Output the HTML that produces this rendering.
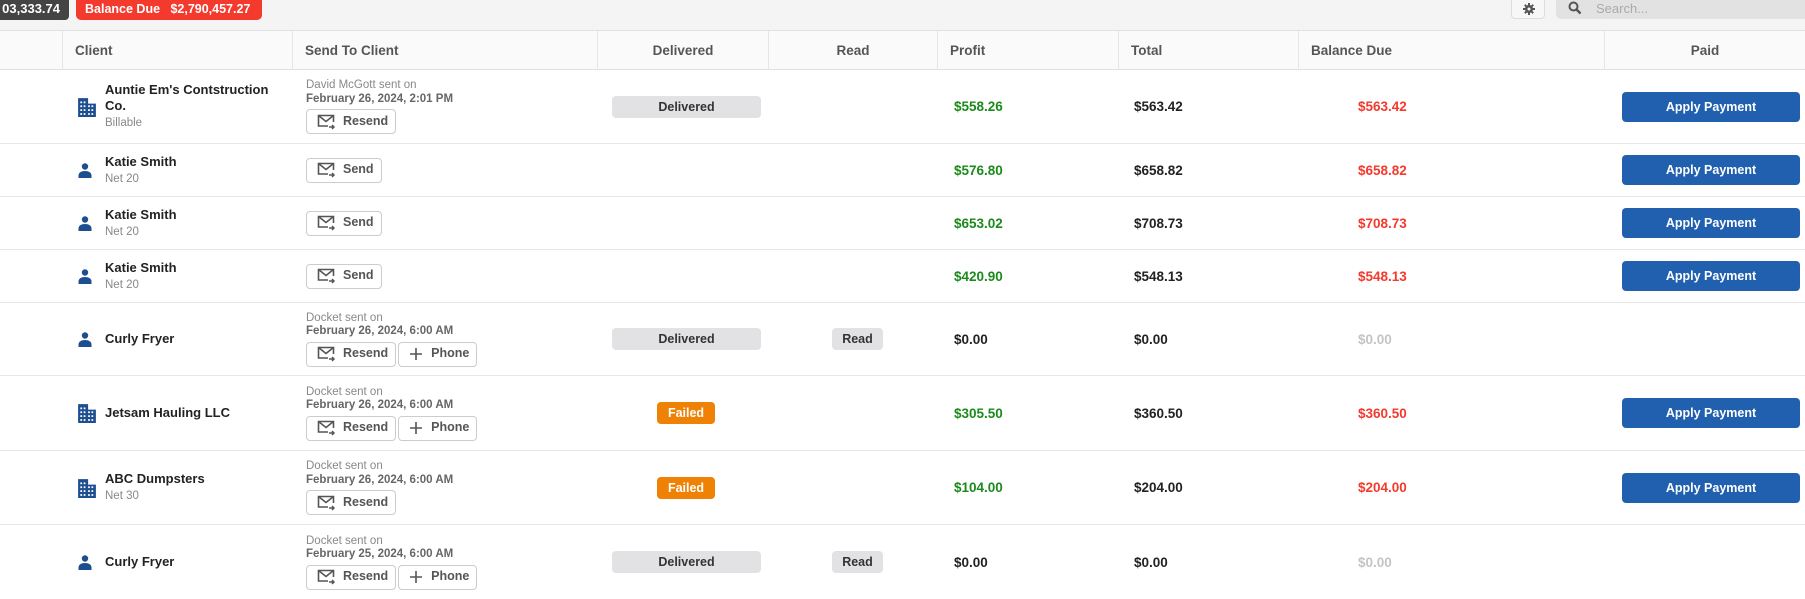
<!DOCTYPE html>
<html><head><meta charset="utf-8"><style>
*{box-sizing:border-box;margin:0;padding:0}
body{width:1805px;height:585px;overflow:hidden;background:#fff;font-family:"Liberation Sans",Arial,sans-serif;position:relative;color:#222}
.top{position:absolute;left:0;top:0;width:1805px;height:31px;background:#f4f4f4;border-bottom:1px solid #e2e2e2}
.b1{position:absolute;left:0;top:-4px;width:69px;height:24px;background:#444;color:#fff;font-weight:bold;font-size:13px;border-radius:0 0 4px 0;padding:5px 0 0 0;text-align:right;padding-right:9px}
.b2{position:absolute;left:76px;top:-4px;width:186px;height:24px;background:#f4392d;color:#fff;font-weight:bold;font-size:12.5px;border-radius:0 0 5px 5px;padding:6px 0 0 9px;white-space:nowrap}
.gear{position:absolute;left:1511px;top:-4px;width:34px;height:23px;border:1px solid #ddd;border-radius:4px;background:#f7f7f7}
.gear svg{position:absolute;left:11px;top:6px}
.search{position:absolute;left:1556px;top:-4px;width:260px;height:23px;background:#e2e2e2;border-radius:5px;color:#aaa;font-size:13px;padding:5px 0 0 40px}
.search svg{position:absolute;left:12px;top:5px}
.hdr{position:absolute;top:31px;left:0;width:1805px;height:39px;background:#fafafa;border-bottom:1px solid #e0e0e0}
.hc{position:absolute;top:0;height:39px;border-left:1px solid #e6e6e6;font-size:13.5px;color:#555;font-weight:bold;padding-top:12px}
.row{position:absolute;left:0;width:1805px;border-bottom:1.5px solid #e6e6e6}
.c{position:absolute;top:0;height:100%;display:flex;align-items:center}
.ico{position:absolute;left:77px}
.nm{position:absolute;left:105px;font-size:13px;font-weight:bold;color:#222;line-height:16px}
.sub{font-size:11.5px;color:#888;font-weight:normal}
.snd{position:absolute;left:306px;font-size:11.5px;color:#888;line-height:13.5px}
.snd b{color:#666}
.btn{display:inline-flex;align-items:center;height:25px;border:1px solid #ccc;border-radius:4px;padding:0 7px 0 10px;font-size:12.5px;color:#555;font-weight:bold;background:#fff;margin-top:3px;margin-right:2px;vertical-align:top}
.btn svg{margin-right:8px}
.pill{position:absolute;height:22px;border-radius:4px;font-size:12.5px;font-weight:bold;text-align:center;line-height:22px}
.dl{left:612px;width:149px;background:#e2e2e4;color:#333}
.rd{left:832px;width:51px;background:#e2e2e4;color:#333}
.fl{left:657px;width:58px;background:#ef8205;color:#fff}
.v{position:absolute;font-size:13.5px;font-weight:bold}
.p{left:954px;color:#1b8a1b}
.t{left:1134px;color:#222}
.bd{left:1358px;color:#f4392d}
.bz{left:1358px;color:#c4c4c4}
.ap{position:absolute;left:1622px;width:178px;height:30px;background:#2160ae;color:#fff;font-weight:bold;font-size:12.5px;border-radius:4px;text-align:center;line-height:30px}
</style></head><body>
<div class="top">
<div class="b1">03,333.74</div>
<div class="b2">Balance Due &nbsp;&nbsp;$2,790,457.27</div>
<div class="gear"><svg width="12" height="12" viewBox="0 0 12 12"><circle cx="6" cy="6" r="4" fill="#555"/><path d="M6 0v12M0 6h12M1.8 1.8l8.4 8.4M10.2 1.8l-8.4 8.4" stroke="#555" stroke-width="2"/><circle cx="6" cy="6" r="1.5" fill="#f7f7f7"/></svg></div>
<div class="search"><svg width="14" height="14" viewBox="0 0 14 14"><circle cx="5.5" cy="5.5" r="4" fill="none" stroke="#555" stroke-width="2"/><path d="M8.5 8.5L12.5 12.5" stroke="#555" stroke-width="2.5"/></svg>Search...</div>
</div>
<div class="hdr">
<div class="hc" style="left:62px;width:230px;padding-left:12px">Client</div>
<div class="hc" style="left:292px;width:305px;padding-left:12px">Send To Client</div>
<div class="hc" style="left:597px;width:171px;text-align:center">Delivered</div>
<div class="hc" style="left:768px;width:169px;text-align:center">Read</div>
<div class="hc" style="left:937px;width:181px;padding-left:12px">Profit</div>
<div class="hc" style="left:1118px;width:180px;padding-left:12px">Total</div>
<div class="hc" style="left:1298px;width:306px;padding-left:12px">Balance Due</div>
<div class="hc" style="left:1604px;width:201px;text-align:center">Paid</div>
</div>

<svg width="0" height="0" style="position:absolute"><defs>
<symbol id="bld" viewBox="0 0 18 18"><path d="M1 1h9v5h7v12H1z" fill="#1d4e8f"/><g fill="#fff"><rect x="3" y="4" width="1.6" height="1.6"/><rect x="6" y="4" width="1.6" height="1.6"/><rect x="3" y="7.5" width="1.6" height="1.6"/><rect x="6" y="7.5" width="1.6" height="1.6"/><rect x="10" y="7.5" width="1.6" height="1.6"/><rect x="13" y="7.5" width="1.6" height="1.6"/><rect x="3" y="11" width="1.6" height="1.6"/><rect x="6" y="11" width="1.6" height="1.6"/><rect x="10" y="11" width="1.6" height="1.6"/><rect x="13" y="11" width="1.6" height="1.6"/><rect x="3" y="14.5" width="1.6" height="1.6"/><rect x="6" y="14.5" width="1.6" height="1.6"/><rect x="10" y="14.5" width="1.6" height="1.6"/><rect x="13" y="14.5" width="1.6" height="1.6"/></g></symbol>
<symbol id="usr" viewBox="0 0 16 16"><circle cx="8" cy="4.5" r="3.2" fill="#1d4e8f"/><path d="M1.5 16v-2.5c0-3 3-4.5 6.5-4.5s6.5 1.5 6.5 4.5V16z" fill="#1d4e8f"/></symbol>
<symbol id="env" viewBox="0 0 18 16"><path d="M11 12H1.5V1.5h15V8" fill="none" stroke="#555" stroke-width="1.6"/><path d="M1.5 1.5L9 7.5l7.5-6" fill="none" stroke="#555" stroke-width="1.6"/><path d="M12 13h5M15 11l2 2-2 2" fill="none" stroke="#555" stroke-width="1.5"/></symbol>
<symbol id="pls" viewBox="0 0 14 14"><path d="M7 1v12M1 7h12" stroke="#555" stroke-width="1.6"/></symbol>
</defs></svg>

<div class="row" style="top:70px;height:74px">
<div class="c" style="left:0;width:1805px">
<svg class="ico" width="20" height="20"><use href="#bld"/></svg>
<div class="nm">Auntie Em's Contstruction<br>Co.<br><span class="sub">Billable</span></div>
<div class="snd">David McGott sent on<br><b>February 26, 2024, 2:01 PM</b><br><span class="btn"><svg width="18" height="16"><use href="#env"/></svg>Resend</span></div>
<div class="pill dl">Delivered</div>
<div class="v p">$558.26</div><div class="v t">$563.42</div><div class="v bd">$563.42</div>
<div class="ap">Apply Payment</div>
</div></div>

<div class="row" style="top:144px;height:53px"><div class="c" style="left:0;width:1805px">
<svg class="ico" width="16" height="16"><use href="#usr"/></svg>
<div class="nm">Katie Smith<br><span class="sub">Net 20</span></div>
<div class="snd"><span class="btn" style="margin-top:0"><svg width="18" height="16"><use href="#env"/></svg>Send</span></div>
<div class="v p">$576.80</div><div class="v t">$658.82</div><div class="v bd">$658.82</div>
<div class="ap">Apply Payment</div></div></div>

<div class="row" style="top:197px;height:53px"><div class="c" style="left:0;width:1805px">
<svg class="ico" width="16" height="16"><use href="#usr"/></svg>
<div class="nm">Katie Smith<br><span class="sub">Net 20</span></div>
<div class="snd"><span class="btn" style="margin-top:0"><svg width="18" height="16"><use href="#env"/></svg>Send</span></div>
<div class="v p">$653.02</div><div class="v t">$708.73</div><div class="v bd">$708.73</div>
<div class="ap">Apply Payment</div></div></div>

<div class="row" style="top:250px;height:53px"><div class="c" style="left:0;width:1805px">
<svg class="ico" width="16" height="16"><use href="#usr"/></svg>
<div class="nm">Katie Smith<br><span class="sub">Net 20</span></div>
<div class="snd"><span class="btn" style="margin-top:0"><svg width="18" height="16"><use href="#env"/></svg>Send</span></div>
<div class="v p">$420.90</div><div class="v t">$548.13</div><div class="v bd">$548.13</div>
<div class="ap">Apply Payment</div></div></div>

<div class="row" style="top:303px;height:73px"><div class="c" style="left:0;width:1805px">
<svg class="ico" width="16" height="16"><use href="#usr"/></svg>
<div class="nm">Curly Fryer</div>
<div class="snd">Docket sent on<br><b>February 26, 2024, 6:00 AM</b><br><span class="btn"><svg width="18" height="16"><use href="#env"/></svg>Resend</span><span class="btn"><svg width="14" height="14"><use href="#pls"/></svg>Phone</span></div>
<div class="pill dl">Delivered</div><div class="pill rd">Read</div>
<div class="v p" style="color:#222">$0.00</div><div class="v t">$0.00</div><div class="v bz">$0.00</div>
</div></div>

<div class="row" style="top:376px;height:75px"><div class="c" style="left:0;width:1805px">
<svg class="ico" width="20" height="20"><use href="#bld"/></svg>
<div class="nm">Jetsam Hauling LLC</div>
<div class="snd">Docket sent on<br><b>February 26, 2024, 6:00 AM</b><br><span class="btn"><svg width="18" height="16"><use href="#env"/></svg>Resend</span><span class="btn"><svg width="14" height="14"><use href="#pls"/></svg>Phone</span></div>
<div class="pill fl">Failed</div>
<div class="v p">$305.50</div><div class="v t">$360.50</div><div class="v bd">$360.50</div>
<div class="ap">Apply Payment</div></div></div>

<div class="row" style="top:451px;height:74px"><div class="c" style="left:0;width:1805px">
<svg class="ico" width="20" height="20"><use href="#bld"/></svg>
<div class="nm">ABC Dumpsters<br><span class="sub">Net 30</span></div>
<div class="snd">Docket sent on<br><b>February 26, 2024, 6:00 AM</b><br><span class="btn"><svg width="18" height="16"><use href="#env"/></svg>Resend</span></div>
<div class="pill fl">Failed</div>
<div class="v p">$104.00</div><div class="v t">$204.00</div><div class="v bd">$204.00</div>
<div class="ap">Apply Payment</div></div></div>

<div class="row" style="top:525px;height:74px;border-bottom:none"><div class="c" style="left:0;width:1805px;height:74px">
<svg class="ico" width="16" height="16"><use href="#usr"/></svg>
<div class="nm">Curly Fryer</div>
<div class="snd">Docket sent on<br><b>February 25, 2024, 6:00 AM</b><br><span class="btn"><svg width="18" height="16"><use href="#env"/></svg>Resend</span><span class="btn"><svg width="14" height="14"><use href="#pls"/></svg>Phone</span></div>
<div class="pill dl">Delivered</div><div class="pill rd">Read</div>
<div class="v p" style="color:#222">$0.00</div><div class="v t">$0.00</div><div class="v bz">$0.00</div>
</div></div>
</body></html>
